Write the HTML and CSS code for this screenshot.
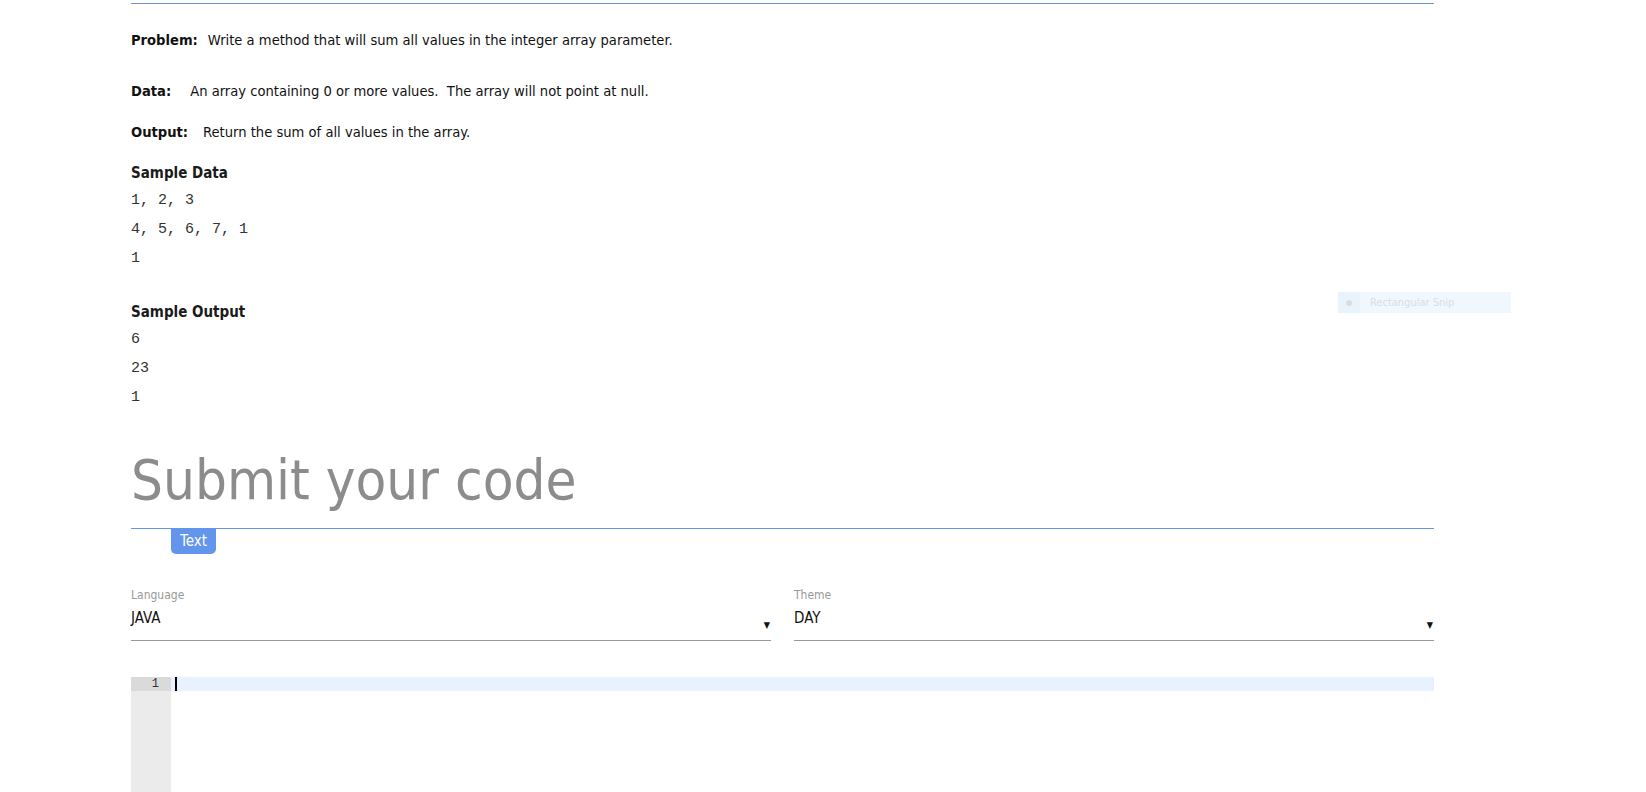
FILE: index.html
```html
<!DOCTYPE html>
<html lang="en">

<head>
    <meta charset="UTF-8">
    <meta name="viewport" content="width=device-width, initial-scale=1.0">
    <title>Sum Array</title>
    <link rel="stylesheet" href="styles.css">
</head>

<body>
    <div class="wrap">
        <!-- 문제 설명 -->
        <div class="prob">
            <p class="pline pl1"><b class="lbl lb1">Problem:</b>Write a method that will sum all values in the integer array parameter.</p>
            <p class="pline pl2"><b class="lbl lb2">Data:</b>An array containing 0 or more values.&nbsp; The array will not point at null.</p>
            <p class="pline pl3"><b class="lbl lb3">Output:</b>Return the sum of all values in the array.</p>

            <h4 class="stit">Sample Data</h4>
            <pre class="samp">1, 2, 3</pre>
            <pre class="samp">4, 5, 6, 7, 1</pre>
            <pre class="samp">1</pre>

            <h4 class="stit st2">Sample Output</h4>
            <pre class="samp">6</pre>
            <pre class="samp">23</pre>
            <pre class="samp">1</pre>
        </div>

        <!-- 코드 제출 -->
        <h2 class="subtit">Submit your code</h2>
        <div class="tabs">
            <span class="tab">Text</span>
        </div>

        <div class="sels">
            <div class="sel">
                <label class="slbl">Language</label>
                <div class="sval">JAVA<span class="arr">&#9660;</span></div>
            </div>
            <div class="sel">
                <label class="slbl">Theme</label>
                <div class="sval">DAY<span class="arr">&#9660;</span></div>
            </div>
        </div>

        <!-- 에디터 -->
        <div class="editor">
            <div class="gutter">
                <div class="lnum">1</div>
            </div>
            <div class="lines">
                <div class="cline"><span class="cursor"></span></div>
            </div>
        </div>
    </div>

    <!-- 캡처도구 잔상 -->
    <div class="snip">
        <span class="sicon"><i></i></span>
        <span class="stxt">Rectangular Snip</span>
    </div>
</body>

</html>
```

FILE: styles.css
```css
html,
body {
    margin: 0;
    padding: 0;
}

body {
    color: #111;
    background-color: #fff;
    font-family: "DejaVu Sans Condensed", "DejaVu Sans", sans-serif;
    font-stretch: condensed;
    overflow: hidden;
}

/* 전체 박스 */
.wrap {
    width: 1303px;
    margin: 3px 0 0 131px;
    border-top: 1px solid #6b93d6;
}

/* 문제 문단 */
.pline {
    margin: 0;
    font-size: 14.6px;
    line-height: 20px;
}

.pl1 {
    margin-top: 26px;
}

.pl2 {
    margin-top: 31px;
}

.pl3 {
    margin-top: 21px;
}

.lbl {
    display: inline-block;
}

.lb1 {
    margin-right: 10px;
}

.lb2 {
    margin-right: 19px;
}

.lb3 {
    margin-right: 15px;
}

/* 샘플 제목 */
.stit {
    margin: 21px 0 8px;
    font-size: 15px;
    line-height: 20px;
    color: #1a1a1a;
}

.st2 {
    margin-top: 33px;
}

/* 샘플 데이터 */
.samp {
    margin: 0 0 9px;
    font-family: "Liberation Mono", monospace;
    font-size: 15px;
    line-height: 20px;
    color: #333;
}

/* 코드 제출 제목 */
.subtit {
    margin: 42px 0 0;
    padding-bottom: 18px;
    font-size: 56px;
    font-weight: normal;
    line-height: 60px;
    color: #8c8c8c;
    border-bottom: 1px solid #6495ed;
}

.tabs {
    display: flex;
    padding-left: 40px;
}

.tab {
    height: 25px;
    padding: 0 9px;
    font-size: 15px;
    line-height: 24px;
    color: #fff;
    background-color: #6495ed;
    border-radius: 0 0 5px 5px;
}

/* 선택박스 */
.sels {
    display: flex;
    gap: 23px;
    margin-top: 35px;
}

.sel {
    flex: 1;
}

.slbl {
    display: block;
    font-size: 12px;
    line-height: 12px;
    color: #999;
}

.sval {
    display: flex;
    justify-content: space-between;
    align-items: flex-end;
    margin-top: 7px;
    padding-bottom: 12px;
    font-size: 15px;
    line-height: 20px;
    border-bottom: 1px solid #999;
}

.arr {
    font-size: 9px;
    line-height: 14px;
    margin-right: 1px;
    margin-bottom: -4px;
}

/* 에디터 */
.editor {
    display: flex;
    margin-top: 36px;
    height: 120px;
}

.gutter {
    width: 40px;
    background-color: #ebebeb;
}

.lnum {
    height: 14px;
    padding-right: 12px;
    text-align: right;
    font-family: "Liberation Mono", monospace;
    font-size: 12px;
    line-height: 14px;
    color: #333;
    background-color: #dadada;
}

.lines {
    flex: 1;
    padding-left: 4px;
}

.cline {
    height: 14px;
    margin-left: -4px;
    padding-left: 4px;
    background-color: #e8f2fe;
}

.cursor {
    display: block;
    width: 2px;
    height: 14px;
    background-color: #000;
}

/* 캡처도구 잔상 - 화면 위에 떠있음 */
.snip {
    position: absolute;
    top: 292px;
    left: 1338px;
    display: flex;
    align-items: center;
    width: 173px;
    height: 21px;
    background-color: #f0f7fe;
    font-family: "DejaVu Sans", sans-serif;
    font-size: 11px;
    color: #d8dee4;
}

.sicon {
    display: flex;
    align-items: center;
    justify-content: center;
    width: 22px;
    height: 21px;
    margin-right: 10px;
    background-color: #e8f3fc;
}

.sicon i {
    width: 6px;
    height: 6px;
    border-radius: 50%;
    background-color: #dcdcdc;
}
```
